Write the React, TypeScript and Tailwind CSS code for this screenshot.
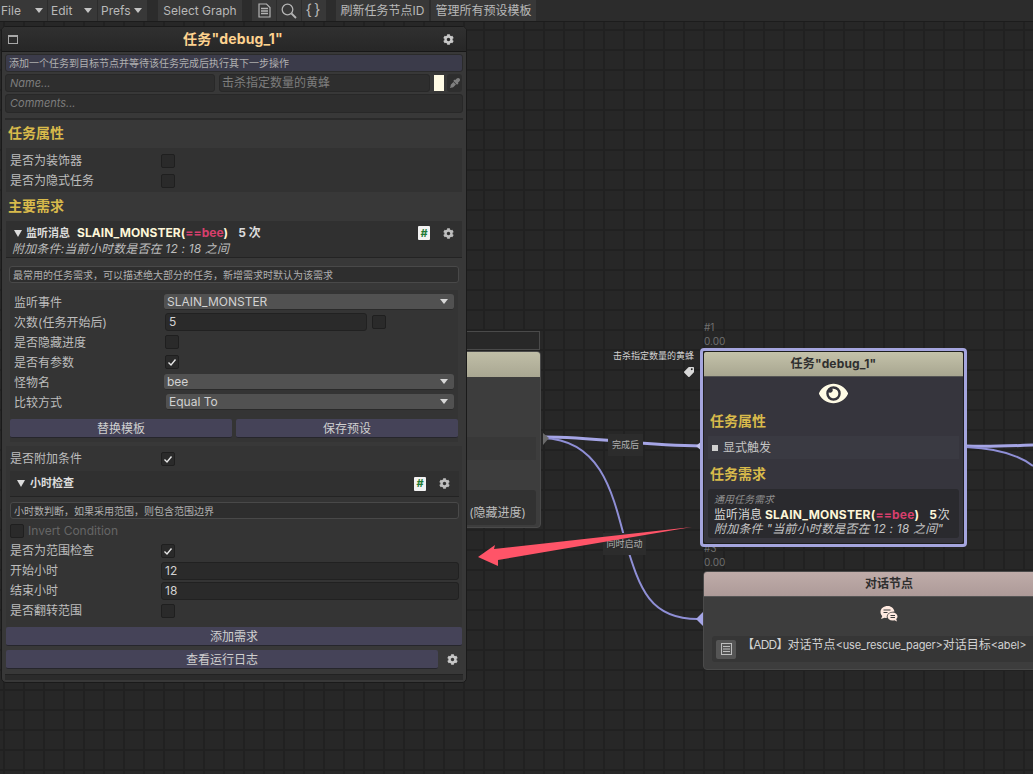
import React from "react";
import { FaCog, FaEye, FaTag, FaEyeDropper } from "react-icons/fa";

const FONT = "font-['Inter','Noto_Sans_CJK_SC','Noto_Sans',sans-serif]";

function Tri({ className = "" }: { className?: string }) {
  return <span className={"inline-block w-0 h-0 border-l-[4px] border-r-[4px] border-t-[5px] border-l-transparent border-r-transparent border-t-[#c4c4c4] " + className} />;
}

function BigTri() {
  return <span className="inline-block w-0 h-0 border-l-[4px] border-r-[4px] border-t-[7px] border-l-transparent border-r-transparent border-t-[#dcdcdc]" />;
}

function Check({ on = false, cls = "" }: { on?: boolean; cls?: string }) {
  return (
    <span className={"flex items-center justify-center w-[14px] h-[14px] rounded-[2px] bg-[#2a2a2a] border border-[#1f1f1f] shrink-0 " + cls}>
      {on && (
        <svg width="10" height="10" viewBox="0 0 10 10">
          <path d="M1.5 5.500 L4 8 L8.500 2.500" fill="none" stroke="#e6e6e6" strokeWidth="1.4" />
        </svg>
      )}
    </span>
  );
}

function Hash() {
  return (
    <span className="flex items-center justify-center w-[12px] h-[14px] bg-[#f2f2f2] rounded-[1px] text-[#1d7a35] text-[11px] font-bold leading-none shrink-0">
      #
    </span>
  );
}

function Dropdown({ text, cls = "" }: { text: string; cls?: string }) {
  return (
    <div className={"flex items-center justify-between h-[16px] rounded-[3px] bg-[#515151] border-b border-[#2a2a2a] pl-[3px] pr-[6px] text-[#d2d2d2] " + cls}>
      <span>{text}</span>
      <Tri className="border-t-[#d8d8d8]" />
    </div>
  );
}

function Input({ text, cls = "" }: { text: string; cls?: string }) {
  return (
    <div className={"flex items-center h-[18px] rounded-[3px] bg-[#2a2a2a] border border-[#212121] pl-[3px] text-[#d2d2d2] " + cls}>
      {text}
    </div>
  );
}

function Btn({ text, cls = "" }: { text: string; cls?: string }) {
  return (
    <div className={"flex items-center justify-center h-[19px] pt-[1px] rounded-[2px] bg-[#454358] border-b border-[#26262c] text-[#cfcfcf] " + cls}>
      {text}
    </div>
  );
}

function HelpBox({ text, cls = "" }: { text: string; cls?: string }) {
  return (
    <div className={"flex items-center h-[17px] rounded-[3px] bg-[#2e2e2e] border border-[#494949] pl-[3px] text-[10px] text-[#b0b0b0] " + cls}>
      {text}
    </div>
  );
}

function ToolBtn({ children, w, cls = "" }: { children: React.ReactNode; w: string; cls?: string }) {
  return <div className={"flex items-center h-[21px] bg-[#383838] text-[#b9b9b9] " + w + " " + cls}>{children}</div>;
}

function Toolbar() {
  return (
    <div className="flex items-center h-[22px] bg-[#2c2c2c] border-b border-[#1c1c1c] text-[12px]">
      <ToolBtn w="w-[47px]" cls="pl-[1px] justify-between pr-[4px] mr-[1px]">File<Tri /></ToolBtn>
      <ToolBtn w="w-[49px]" cls="pl-[3px] justify-between pr-[5px] mr-[1px]">Edit<Tri /></ToolBtn>
      <ToolBtn w="w-[49px]" cls="pl-[3px] justify-between pr-[5px] mr-[11px]">Prefs<Tri /></ToolBtn>
      <ToolBtn w="w-[84px]" cls="justify-center mr-[10px]">Select Graph</ToolBtn>
      <ToolBtn w="w-[24px]" cls="justify-center mr-[1px]">
        <svg width="13" height="15" viewBox="0 0 13 15" fill="none">
          <path d="M1 1 H8.500 L12 4.500 V14 H1 Z" stroke="#b4b4b4" strokeWidth="1.2" />
          <path d="M3 5.500 H10 M3 8 H10 M3 10.500 H10" stroke="#b4b4b4" strokeWidth="1.300" />
        </svg>
      </ToolBtn>
      <ToolBtn w="w-[24px]" cls="justify-center mr-[1px]">
        <svg width="16" height="16" viewBox="0 0 16 16" fill="none">
          <circle cx="6.500" cy="6.500" r="5.300" stroke="#b4b4b4" strokeWidth="1.300" />
          <path d="M10.500 10.500 L15 15" stroke="#b4b4b4" strokeWidth="1.800" />
        </svg>
      </ToolBtn>
      <ToolBtn w="w-[24px]" cls="justify-center mr-[10px] text-[15px] tracking-[2px]">{"{}"}</ToolBtn>
      <ToolBtn w="w-[93px]" cls="justify-center mr-[2px]">刷新任务节点ID</ToolBtn>
      <ToolBtn w="w-[105px]" cls="justify-center">管理所有预设模板</ToolBtn>
    </div>
  );
}

function Heading({ text, cls = "" }: { text: string; cls?: string }) {
  return <div className={"flex items-center font-bold text-[14px] text-[#d8ba4b] leading-none " + cls}>{text}</div>;
}

function PanelRow({ label, children, cls = "" }: { label: string; children?: React.ReactNode; cls?: string }) {
  return (
    <div className={"flex items-center h-[20px] text-[#bdbdbd] " + cls}>
      <span className="w-[151px] shrink-0">{label}</span>
      {children}
    </div>
  );
}

function InnerRow({ label, children }: { label: string; children?: React.ReactNode }) {
  return (
    <div className="flex items-center h-[20px] text-[#bdbdbd]">
      <span className="w-[150px] shrink-0 pt-[1px]">{label}</span>
      {children}
    </div>
  );
}

function Panel() {
  return (
    <div className="absolute left-[1px] top-[26px] w-[466px] h-[657px] rounded-[5px] bg-[#383838] border border-[#1a1a1a] text-[12px] leading-none overflow-hidden">
      <div className="relative flex items-center justify-center h-[25px] bg-gradient-to-b from-[#303030] to-[#272727] border-b border-[#171717] pr-[2px]">
        <span className="absolute left-[6px] top-[8px] w-[10px] h-[9px] border border-[#a8a8a8] border-t-[2px]" />
        <span className="font-bold text-[14px] tracking-[0.15px] text-[#fdd28f]">任务"debug_1"</span>
        <FaCog size={11} className="absolute right-[12px] top-[7px] text-[#c8c8c8]" />
      </div>
      <div className="px-[3px]">
        <div className="flex items-center mt-[2px] h-[18px] rounded-[3px] bg-[#3b3b4a] border border-[#2b2b2b] pl-[3px] text-[10px] text-[#b0b0b0]">添加一个任务到目标节点并等待该任务完成后执行其下一步操作</div>
        <div className="flex items-center mt-[2px] h-[18px] gap-[4px]">
          <div className="flex items-center w-[210px] h-full rounded-[3px] bg-[#2e2e2e] border border-[#282828] pl-[4px] text-[11px] italic text-[#7d7d7d]">Name...</div>
          <div className="flex items-center w-[211px] h-full rounded-[3px] bg-[#2e2e2e] border border-[#282828] pl-[2px] text-[#7d7d7d]">击杀指定数量的黄蜂</div>
          <div className="w-[10px] h-[16px] bg-[#fffbe5]" />
          <div className="flex items-center justify-center w-[15px] -ml-[1px] h-full rounded-[3px] bg-[#2e2e2e]"><FaEyeDropper size={10} className="text-[#7f7f7f]" /></div>
        </div>
        <div className="flex items-center mt-[2px] h-[19px] rounded-[3px] bg-[#2e2e2e] border border-[#282828] pl-[4px] text-[11px] italic text-[#7d7d7d]">Comments...</div>
        <div className="mt-[5px] h-[2px] bg-[#2a2a2a]" />

        <Heading text="任务属性" cls="h-[16px] mt-[5px] pl-[3px]" />
        <div className="mt-[7px] h-[44px] bg-[#323232] pl-[4px] ml-[1px] mr-[1px] pt-[3px]">
          <PanelRow label="是否为装饰器"><Check /></PanelRow>
          <PanelRow label="是否为隐式任务"><Check /></PanelRow>
        </div>
        <Heading text="主要需求" cls="h-[16px] mt-[6px] pl-[3px]" />

        <div className="mt-[7px] h-[37px] ml-[1px] mr-[1px] bg-[#303030] border-b border-[#232323] pl-[8px] pt-[6px]">
          <div className="flex items-center h-[12px] text-[#dcdcdc] font-bold text-[11px]">
            <BigTri />
            <span className="ml-[4px]">监听消息</span>
            <span className="ml-[7px] text-[12px] tracking-[0.05px] text-[#fdf6d8]">SLAIN_MONSTER(<span className="text-[#d63f6c]">==bee</span>)</span>
            <span className="ml-[10px] text-[12px] text-[#dcdcdc]">5 次</span>
            <span className="ml-auto flex items-center gap-[13px] pr-[8px]">
              <Hash />
              <FaCog size={11} className="text-[#bdbdbd]" />
            </span>
          </div>
          <div className="mt-[4px] -ml-[2px] italic tracking-[0.18px] text-[#bdbdbd]">附加条件:当前小时数是否在 12 : 18 之间</div>
        </div>

        <HelpBox text="最常用的任务需求，可以描述绝大部分的任务，新增需求时默认为该需求" cls="mt-[8px] ml-[4px] mr-[4px]" />

        <div className="mt-[7px] ml-[5px] mr-[5px] h-[152px] bg-[#343434] pt-[2px] px-[4px]">
          <InnerRow label="监听事件"><Dropdown text="SLAIN_MONSTER" cls="w-[290px]" /></InnerRow>
          <InnerRow label="次数(任务开始后)">
            <Input text="5" cls="w-[202px] ml-[1px]" />
            <Check cls="ml-[5px]" />
          </InnerRow>
          <InnerRow label="是否隐藏进度"><Check cls="ml-[1px]" /></InnerRow>
          <InnerRow label="是否有参数"><Check on cls="ml-[1px]" /></InnerRow>
          <InnerRow label="怪物名"><Dropdown text="bee" cls="w-[290px]" /></InnerRow>
          <InnerRow label="比较方式"><Dropdown text="Equal To" cls="w-[288px] ml-[2px]" /></InnerRow>
          <div className="flex gap-[4px] -mx-[4px] mt-[7px]">
            <Btn text="替换模板" cls="w-[222px]" />
            <Btn text="保存预设" cls="w-[222px]" />
          </div>
        </div>

        <div className="mt-[4px] ml-[1px] mr-[1px] h-[181px] bg-[#343434] pl-[4px] pr-[3px] pt-[3px]">
          <PanelRow label="是否附加条件"><Check on /></PanelRow>
          <div className="flex items-center h-[26px] mt-[2px] bg-[#303030] border-b border-[#232323] font-bold text-[11px] text-[#dcdcdc] pl-[7px] gap-[5px]">
            <BigTri />
            <span>小时检查</span>
            <span className="ml-auto flex items-center gap-[13px] pr-[9px]">
              <Hash />
              <FaCog size={11} className="text-[#bdbdbd]" />
            </span>
          </div>
          <HelpBox text="小时数判断，如果采用范围，则包含范围边界" cls="mt-[5px]" />
          <div className="flex items-center h-[20px] mt-[2px] text-[#666666] gap-[4px]">
            <Check />
            <span>Invert Condition</span>
          </div>
          <PanelRow label="是否为范围检查"><Check on /></PanelRow>
          <PanelRow label="开始小时"><Input text="12" cls="w-[298px]" /></PanelRow>
          <PanelRow label="结束小时"><Input text="18" cls="w-[298px]" /></PanelRow>
          <PanelRow label="是否翻转范围"><Check /></PanelRow>
        </div>

        <Btn text="添加需求" cls="ml-[1px] w-[456px]" />
        <div className="flex items-center mt-[4px] ml-[1px]">
          <Btn text="查看运行日志" cls="w-[432px]" />
          <FaCog size={11} className="ml-[9px] text-[#c8c8c8]" />
        </div>
        <div className="mt-[5px] h-[6px] bg-[#2b2b2b] border-t border-[#222222]" />
      </div>
    </div>
  );
}

function BackNode() {
  return (
    <>
      <div className="absolute left-[440px] top-[331px] w-[100px] h-[19px] bg-[#282828] border border-[#4a4a4a]" />
      <div className="absolute left-[400px] top-[351px] w-[141px] h-[177px] rounded-[4px] bg-[#3d3d3d] border border-[#4a4a4a] overflow-hidden text-[12px]">
        <div className="h-[25px] bg-gradient-to-b from-[#c0bea7] to-[#a9a792]" />
        <div className="absolute right-[4px] top-[85px] w-[120px] h-[23px] bg-[#383838]" />
        <div className="absolute right-[4px] top-[138px] w-[120px] h-[35px] rounded-[3px] bg-[#323232] flex items-center justify-end pr-[10px] pt-[10px] text-[#bdbdbd] whitespace-nowrap">(隐藏进度)</div>
      </div>
    </>
  );
}

function MainNode() {
  return (
    <div className="absolute left-[700px] top-[348px] w-[267px] h-[199px] rounded-[4px] border-[3px] border-[#a5a5de] text-[12px]">
      <div className="w-full h-full rounded-[3px] bg-[#36353d] border border-[#1e1e1e] overflow-hidden">
        <div className="flex items-center justify-center h-[25px] bg-gradient-to-b from-[#c4c2aa] to-[#a8a690] border-b border-[#555555] font-bold tracking-[0.15px] text-[#2f2f2f]">任务"debug_1"</div>
        <div className="flex justify-center mt-[1px] h-[30px] items-center"><FaEye size={29} className="text-[#fffbe5]" /></div>
        <Heading text="任务属性" cls="h-[16px] pl-[6px] mt-[5px]" />
        <div className="flex items-center h-[23px] mx-[4px] mt-[7px] bg-[#3a3a42] text-[#c4c4c4] pl-[4px] gap-[5px]">
          <span className="w-[6px] h-[6px] bg-[#cfcfcf]" />显式触发
        </div>
        <Heading text="任务需求" cls="h-[16px] pl-[6px] mt-[7px]" />
        <div className="mx-[4px] mt-[7px] h-[49px] rounded-[3px] bg-[#2a2a2e] pl-[6px] pt-[3px] whitespace-nowrap">
          <div className="h-[15px] text-[10px] italic text-[#8f8f8f] leading-[14px]">通用任务需求</div>
          <div className="h-[15px] flex items-center text-[#d8d8d8]">
            监听消息
            <span className="ml-[3px] font-bold tracking-[0.2px] text-[#fdf6d8]">SLAIN_MONSTER(<span className="text-[#d63f6c]">==bee</span>)</span>
            <span className="ml-[10px] font-bold text-[#fdf6d8]">5</span>
            <span className="ml-[1px]">次</span>
          </div>
          <div className="h-[14px] flex items-center italic tracking-[0.2px] text-[#c4c4c4]">附加条件 "当前小时数是否在 12 : 18 之间"</div>
        </div>
      </div>
    </div>
  );
}

function DialogNode() {
  return (
    <div className="absolute left-[703px] top-[571px] w-[372px] h-[99px] rounded-[4px] bg-[#3d3d3d] border border-[#4a4a4a] overflow-hidden text-[12px]">
      <div className="flex items-center justify-center h-[25px] bg-gradient-to-b from-[#bfaca9] to-[#ad9a98] border-b border-[#555555] font-bold text-[#2f2f2f]">对话节点</div>
      <div className="flex justify-center items-center mt-[4px] h-[26px]">
        <svg width="18" height="17" viewBox="0 0 18 17">
          <path d="M8 0C3.500 0 .5 2.600.5 6c0 1.600.7 3 1.800 4L1 13l3.600-1.300c.8.2 1.500.3 2.200.3C6.200 8.500 9 5.600 14.500 5.500 13.700 2.300 11.200 0 8 0z" fill="#ffe9df" />
          <path d="M3.500 4h7M3.500 6.500h4" stroke="#3d3d3d" strokeWidth="1" />
          <path d="M12.500 6.500c-3 0-5 1.800-5 4s2 4 5 4c.7 0 1.300-.1 1.900-.3l2.600 1.300-.8-2.500c.8-.7 1.300-1.500 1.300-2.500 0-2.200-2-4-5-4z" fill="#ffe9df" />
          <path d="M10.500 9.500h4.500M10.500 11.500h4.500" stroke="#3d3d3d" strokeWidth="1" />
        </svg>
      </div>
      <div className="flex items-center h-[26px] mx-[8px] mt-[9px] rounded-[3px] bg-[#363636] pl-[4px] gap-[6px] text-[#d2d2d2] whitespace-nowrap">
        <span className="flex items-center justify-center w-[20px] h-[19px] rounded-[2px] bg-[#555555]">
          <svg width="11" height="12" viewBox="0 0 11 12" fill="none">
            <rect x="0.500" y="0.500" width="10" height="11" stroke="#bdbdbd" />
            <path d="M2 3.500H9M2 6H9M2 8.500H9" stroke="#bdbdbd" />
          </svg>
        </span>
        <span className="-mt-[8px]">
          <span className="tracking-[-0.8px]">【ADD】</span>对话节点<span className="text-[11px] tracking-[-0.15px]">&lt;use_rescue_pager&gt;</span>对话目标<span className="text-[11px] tracking-[-0.15px]">&lt;abel&gt;</span>
        </span>
      </div>
    </div>
  );
}

function Wires() {
  return (
    <svg className="absolute left-0 top-0" width="1033" height="774" viewBox="0 0 1033 774">
      <path d="M543 437 C 600 437, 640 446, 702 446" fill="none" stroke="#a5a5e6" strokeWidth="3" />
      <path d="M543 438 C 600 440, 612 490, 625 540 C 640 590, 650 620, 700 619" fill="none" stroke="#8f8fd6" strokeWidth="2" />
      <path d="M966 446 C 985 447, 1010 446, 1033 445" fill="none" stroke="#a5a5e6" strokeWidth="3" />
      <path d="M966 447 C 990 448, 1015 452, 1033 466" fill="none" stroke="#8f8fd6" strokeWidth="2" />
      <polygon points="543,433 543,445 549,438" fill="#6a6a6a" />
      <polygon points="703,440 703,452 696,446" fill="#c4c4ee" />
      <polygon points="703,612 703,626 696,619" fill="#a5a5e6" />
    </svg>
  );
}

function Arrow() {
  return (
    <svg className="absolute left-0 top-0" width="1033" height="774" viewBox="0 0 1033 774">
      <polygon points="478,557 495,545 494,549 692,527 498,560 498,566" fill="#ff5468" />
    </svg>
  );
}

function WireLabel({ text, cls }: { text: string; cls: string }) {
  return <div className={"absolute flex items-center justify-center h-[22px] bg-[#2c2c2c] text-[9px] text-[#b0b0b0] " + cls}>{text}</div>;
}

export default function App() {
  return (
    <div className={"relative w-[1033px] h-[774px] overflow-hidden bg-[#272727] " + FONT}>
      <div className="absolute inset-0 bg-[linear-gradient(#212121_2px,transparent_2px),linear-gradient(90deg,#212121_2px,transparent_2px)] bg-[size:20px_20px] bg-[position:3px_9px]" />
      <div className="relative z-20"><Toolbar /></div>
      <BackNode />
      <Wires />
      <WireLabel text="完成后" cls="left-[608px] top-[434px] w-[35px]" />
      <WireLabel text="同时启动" cls="left-[603px] top-[533px] w-[43px]" />
      <Arrow />
      <div className="absolute left-[704px] top-[322px] text-[10px] leading-[10px] text-[#6f6f6f]">#1</div>
      <div className="absolute left-[704px] top-[336px] text-[10px] leading-[10px] text-[#6f6f6f]">0.00</div>
      <div className="absolute left-[704px] top-[543px] text-[10px] leading-[10px] text-[#6f6f6f]">#3</div>
      <div className="absolute left-[704px] top-[557px] text-[10px] leading-[10px] text-[#6f6f6f]">0.00</div>
      <div className="absolute right-[339px] top-[350px] text-[9px] leading-[12px] text-[#d2d2d2]">击杀指定数量的黄蜂</div>
      <FaTag size={10} className="absolute left-[684px] top-[367px] text-[#d8d8d8] rotate-90" />
      <MainNode />
      <DialogNode />
      <Panel />
    </div>
  );
}
